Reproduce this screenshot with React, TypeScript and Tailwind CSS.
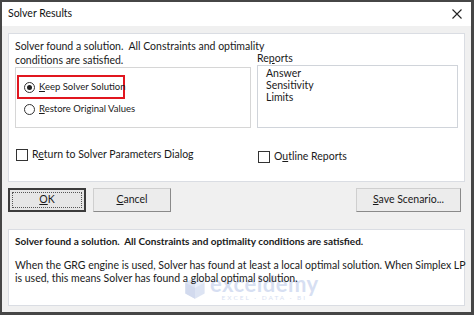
import React from 'react';

const font = { fontFamily: 'Lato, "Open Sans", Arial, sans-serif' };

const Radio = ({ checked }: { checked?: boolean }) => (
  <span className="flex h-[11px] w-[11px] shrink-0 items-center justify-center rounded-full border border-[#333] bg-white">
    {checked && <span className="h-[5px] w-[5px] rounded-full bg-[#222]" />}
  </span>
);

const Check = () => <span className="block h-[12px] w-[12px] shrink-0 border border-[#333] bg-white" />;

const App: React.FC = () => {
  return (
    <div className="h-[315px] w-[474px] bg-[#464646] pb-[3px] pl-[2px] pr-[3px] pt-[2px]" style={font}>
      <div className="relative flex h-full flex-col whitespace-nowrap bg-[#f0f0f0] text-[10.5px] text-[#1a1a1a]">
        {/* Title bar */}
        <div className="flex h-[24px] items-center justify-between bg-white pl-[6px] pr-[6px]">
          <span className="text-[10.5px] text-[#111]">Solver Results</span>
          <svg width="10" height="10" viewBox="0 0 10 10" className="mr-[3px]">
            <path d="M0.5 0.5 L9.5 9.5 M9.5 0.5 L0.5 9.5" stroke="#222" strokeWidth="1.1" />
          </svg>
        </div>

        {/* Main panel */}
        <div className="mx-[6px] mt-[7px] h-[149px] border border-[#dadde3] bg-white px-[6px] pt-[5px]">
          <div className="flex">
            <div className="w-[236px]">
              <div className="leading-[14px]">
                Solver found a solution.&nbsp; All Constraints and optimality
                <br />
                conditions are satisfied.
              </div>
              <div className="h-[61px] border border-[#d6d6d6] pl-[1px] pt-[7px] text-[9.5px]">
                <div className="flex h-[24px] w-[108px] items-center gap-[4px] border-2 border-[#e1161f] pl-[5px]">
                  <Radio checked />
                  <span>
                    <u>K</u>eep Solver Solution
                  </span>
                </div>
                <div className="mt-[3px] flex items-center gap-[4px] pl-[7px]">
                  <Radio />
                  <span>
                    <u>R</u>estore Original Values
                  </span>
                </div>
              </div>
            </div>
            <div className="ml-[6px] flex flex-1 flex-col justify-end">
              <div className="leading-[14px]">
                Re<u>p</u>orts
              </div>
              <div className="h-[63px] border border-[#d0d4da] pl-[8px] pt-[1px] leading-[12px]">
                <div>Answer</div>
                <div>Sensitivity</div>
                <div>Limits</div>
              </div>
            </div>
          </div>
          <div className="mt-[19px] flex items-start">
            <div className="flex w-[243px] items-center gap-[4px] pl-[1px]">
              <Check />
              <span>
                R<u>e</u>turn to Solver Parameters Dialog
              </span>
            </div>
            <div className="mt-[2px] flex items-center gap-[4px]">
              <Check />
              <span>
                O<u>u</u>tline Reports
              </span>
            </div>
          </div>
        </div>

        {/* Buttons */}
        <div className="mx-[6px] mt-[6px] flex h-[24px]">
          <button className="flex w-[78px] items-center justify-center border-2 border-[#3c3c3c] bg-[#e6e6e6] p-[2px]">
            <span className="flex h-full w-full items-center justify-center border border-dotted border-[#555]">
              <u>O</u>K
            </span>
          </button>
          <button className="ml-[7px] flex w-[78px] items-center justify-center border border-[#cfcfcf] border-b-[#8a8a8a] border-r-[#8a8a8a] bg-[#ececec]">
            <span>
              <u>C</u>ancel
            </span>
          </button>
          <div className="flex-1" />
          <button className="mr-[4px] flex w-[105px] items-center justify-center border border-[#cfcfcf] border-b-[#8a8a8a] border-r-[#8a8a8a] bg-[#ececec]">
            <span>
              <u>S</u>ave Scenario...
            </span>
          </button>
        </div>

        {/* Message panel */}
        <div className="relative mx-[6px] mt-[17px] h-[77px] border border-[#dadde3] bg-white px-[6px] pt-[4px]">
          <div className="text-[10px] font-bold leading-[14px]">
            Solver found a solution.&nbsp; All Constraints and optimality conditions are satisfied.
          </div>
          <div className="relative z-10 mt-[11px] leading-[13px]">
            When the GRG engine is used, Solver has found at least a local optimal solution. When Simplex LP
            <br />
            is used, this means Solver has found a global optimal solution.
          </div>
          {/* watermark */}
          <div className="pointer-events-none absolute left-[175px] top-[44px] flex items-center gap-[4px] opacity-35">
            <svg width="22" height="24" viewBox="0 0 18 20">
              <path d="M9 1 L17 5.5 L17 14.5 L9 19 L1 14.5 L1 5.5 Z" fill="#9fb3de" />
              <path d="M9 1 L9 10 L17 5.5 Z" fill="#c5d2ee" />
              <path d="M9 10 L1 5.5 L1 14.5 L9 19 Z" fill="#7f97cf" />
            </svg>
            <div className="flex flex-col items-center">
              <span className="text-[22px] font-bold leading-[20px] tracking-[0.5px] text-[#8ea6dc]">exceldemy</span>
              <span className="text-[6.5px] leading-[8px] tracking-[2px] text-[#8ea6dc]">EXCEL · DATA · BI</span>
            </div>
          </div>
        </div>
      </div>
    </div>
  );
};

export default App;
